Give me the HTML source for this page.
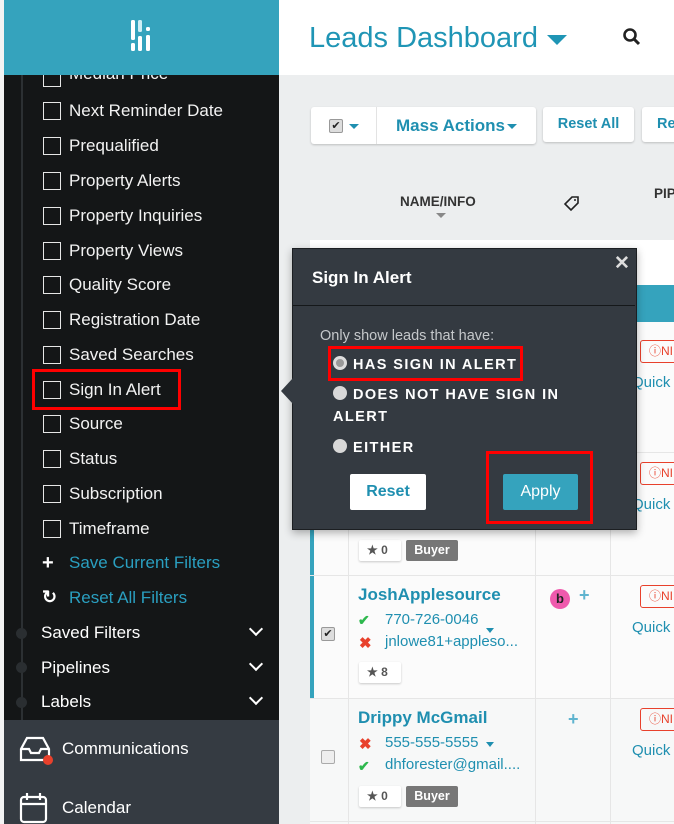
<!DOCTYPE html>
<html><head><meta charset="utf-8"><style>
*{margin:0;padding:0;box-sizing:border-box}
body{width:674px;height:824px;overflow:hidden;position:relative;background:#eceeef;font-family:"Liberation Sans",sans-serif}
.a{position:absolute;white-space:nowrap}
#side{left:4px;top:0;width:275px;height:824px;background:#141617}
.it{position:absolute;left:69px;color:#f2f2f2;font-size:17px;line-height:20px;white-space:nowrap}
.cb{position:absolute;left:43px;width:18px;height:18px;border:1.5px solid #e6e6e6}
.sec{position:absolute;left:41px;color:#fff;font-size:17px;line-height:20px}
.dot{position:absolute;left:16px;width:11px;height:11px;border-radius:50%;background:#2a2e31}
.chev{position:absolute;left:251px;width:10px;height:10px;border-right:2px solid #fff;border-bottom:2px solid #fff;transform:rotate(45deg)}
.btn{position:absolute;background:#fff;border-radius:3px;box-shadow:0 1px 2px rgba(0,0,0,.2);color:#1f8fb0;font-weight:bold}
.teal{color:#1d8fb0}
.rad{display:inline-block;width:14px;height:14px;border-radius:50%;background:#d8d8d8;vertical-align:-1px;margin-right:6px}
.opt{position:absolute;color:#fff;font-weight:bold;font-size:14.5px;letter-spacing:1.4px;line-height:22px}
</style></head><body>
<div class="a" style="left:0;top:0;width:4px;height:824px;background:#f3f3f3"></div>
<div id="side" class="a">
 <div class="a" style="left:0;top:0;width:275px;height:75px;background:#35a3bd"></div>
 <svg class="a" style="left:124px;top:19px" width="32" height="34" viewBox="0 0 32 34"><rect x="3" y="1" width="4" height="20" rx="1.5" fill="#fff"/><rect x="10" y="1" width="4" height="12" rx="1.5" fill="#d0eef5"/><rect x="3" y="24" width="4" height="8" rx="1.5" fill="#fff"/><rect x="10" y="17" width="4" height="15" rx="1.5" fill="#fff"/><rect x="18" y="8" width="4" height="4" rx="1.5" fill="#fff"/><rect x="18" y="16" width="4" height="16" rx="1.5" fill="#fff"/></svg>
 <div class="a" style="left:17px;top:75px;width:2px;height:645px;background:#2c3033"></div>
</div>
<div class="a" style="left:4px;top:75px;width:275px;height:645px;overflow:hidden">
 <div class="cb" style="left:39px;top:-6px"></div><div class="it" style="left:65px;top:-11px">Median Price</div>
</div>
<div class="cb" style="top:102px"></div><div class="it" style="top:101px">Next Reminder Date</div>
<div class="cb" style="top:137px"></div><div class="it" style="top:136px">Prequalified</div>
<div class="cb" style="top:172px"></div><div class="it" style="top:171px">Property Alerts</div>
<div class="cb" style="top:207px"></div><div class="it" style="top:206px">Property Inquiries</div>
<div class="cb" style="top:242px"></div><div class="it" style="top:241px">Property Views</div>
<div class="cb" style="top:276px"></div><div class="it" style="top:275px">Quality Score</div>
<div class="cb" style="top:311px"></div><div class="it" style="top:310px">Registration Date</div>
<div class="cb" style="top:346px"></div><div class="it" style="top:345px">Saved Searches</div>
<div class="cb" style="top:381px"></div><div class="it" style="top:380px">Sign In Alert</div>
<div class="a" style="left:32px;top:369px;width:149px;height:41px;border:3px solid #f00"></div>
<div class="cb" style="top:415px"></div><div class="it" style="top:414px">Source</div>
<div class="cb" style="top:450px"></div><div class="it" style="top:449px">Status</div>
<div class="cb" style="top:485px"></div><div class="it" style="top:484px">Subscription</div>
<div class="cb" style="top:520px"></div><div class="it" style="top:519px">Timeframe</div>
<div class="a" style="left:42px;top:554px;color:#fff;font-size:20px;font-weight:bold;line-height:18px">+</div>
<div class="it teal" style="top:553px;color:#2a9fc0">Save Current Filters</div>
<div class="a" style="left:42px;top:587px;color:#fff;font-size:18px;font-weight:bold;line-height:20px">&#x21bb;</div>
<div class="it" style="top:588px;color:#2a9fc0">Reset All Filters</div>
<div class="dot" style="top:628px"></div><div class="sec" style="top:623px">Saved Filters</div><div class="chev" style="top:624px"></div>
<div class="dot" style="top:662px"></div><div class="sec" style="top:658px">Pipelines</div><div class="chev" style="top:659px"></div>
<div class="dot" style="top:697px"></div><div class="sec" style="top:692px">Labels</div><div class="chev" style="top:693px"></div>
<div class="a" style="left:4px;top:720px;width:275px;height:104px;background:#353b42"></div>
<svg class="a" style="left:18px;top:735px" width="36" height="30" viewBox="0 0 36 30"><path d="M3 14 L9 3 H25 L31 14 V25 H3 Z M3 14 H11 L13 18 H21 L23 14 H31" fill="none" stroke="#fff" stroke-width="2.2"/><circle cx="30" cy="25" r="5" fill="#e8412c"/></svg>
<div class="a" style="left:62px;top:739px;color:#fff;font-size:17px">Communications</div>
<svg class="a" style="left:19px;top:791px" width="30" height="33" viewBox="0 0 30 33"><rect x="2" y="6" width="25" height="25" rx="3" fill="none" stroke="#fff" stroke-width="2.2"/><path d="M2 13 H27 M8 2 V9 M21 2 V9" stroke="#fff" stroke-width="2.2"/></svg>
<div class="a" style="left:62px;top:798px;color:#fff;font-size:17px">Calendar</div>

<!-- header -->
<div class="a" style="left:279px;top:0;width:395px;height:75px;background:#fff"></div>
<div class="a" style="left:309px;top:20px;color:#1f95b5;font-size:29px;line-height:36px">Leads Dashboard</div>
<div class="a" style="left:547px;top:35px;border-left:10px solid transparent;border-right:10px solid transparent;border-top:10px solid #1f95b5"></div>
<svg class="a" style="left:622px;top:27px" width="20" height="20" viewBox="0 0 20 20"><circle cx="8" cy="8" r="5.5" fill="none" stroke="#222" stroke-width="2.6"/><path d="M12 12 L17 17" stroke="#222" stroke-width="3"/></svg>

<!-- toolbar -->
<div class="btn" style="left:311px;top:107px;width:225px;height:37px"></div>
<div class="a" style="left:376px;top:107px;width:1px;height:37px;background:#e3e3e3"></div>
<div class="a" style="left:329px;top:119px;width:14px;height:14px;border:1px solid #999;border-radius:2px;background:#ddd;font-size:11px;line-height:12px;text-align:center;color:#222">&#10004;</div>
<div class="a" style="left:349px;top:124px;border-left:5px solid transparent;border-right:5px solid transparent;border-top:5px solid #1f8fb0"></div>
<div class="a" style="left:396px;top:116px;color:#1f8fb0;font-size:17px;font-weight:bold">Mass Actions</div>
<div class="a" style="left:507px;top:124px;border-left:5px solid transparent;border-right:5px solid transparent;border-top:5px solid #1f8fb0"></div>
<div class="btn" style="left:543px;top:107px;width:91px;height:35px;font-size:14.5px;text-align:center;line-height:35px">Reset All</div>
<div class="btn" style="left:642px;top:107px;width:40px;height:35px;font-size:14.5px;line-height:35px;padding-left:15px">Re</div>

<div class="a" style="left:400px;top:194px;color:#333;font-size:13.5px;font-weight:bold">NAME/INFO</div>
<div class="a" style="left:436px;top:213px;border-left:5px solid transparent;border-right:5px solid transparent;border-top:5px solid #888"></div>
<svg class="a" style="left:563px;top:195px" width="18" height="18" viewBox="0 0 18 18"><path d="M9 2 H15 V8 L8 15 L2 9 Z" fill="none" stroke="#222" stroke-width="1.6"/><circle cx="12" cy="5" r="1" fill="#222"/></svg>
<div class="a" style="left:654px;top:186px;color:#333;font-size:13.5px;font-weight:bold">PIP</div>

<!-- table -->
<div class="a" style="left:310px;top:240px;width:364px;height:584px;background:#fff"></div>
<div class="a" style="left:310px;top:285px;width:364px;height:37px;background:#35a3bd"></div>
<div class="a" style="left:310px;top:322px;width:364px;height:376px;background:#fbfbfb"></div>
<div class="a" style="left:310px;top:322px;width:4px;height:376px;background:#35a3bd"></div>
<div class="a" style="left:310px;top:698px;width:364px;height:126px;background:#f7f8f8"></div>
<div class="a" style="left:348px;top:322px;width:1px;height:502px;background:#e6e6e6"></div>
<div class="a" style="left:535px;top:322px;width:1px;height:502px;background:#e6e6e6"></div>
<div class="a" style="left:610px;top:322px;width:1px;height:502px;background:#e6e6e6"></div>
<div class="a" style="left:310px;top:452px;width:364px;height:1px;background:#e6e6e6"></div>
<div class="a" style="left:310px;top:575px;width:364px;height:1px;background:#e6e6e6"></div>
<div class="a" style="left:310px;top:698px;width:364px;height:1px;background:#e6e6e6"></div>
<div class="a" style="left:310px;top:821px;width:364px;height:1px;background:#e6e6e6"></div>

<div class="a" style="left:640px;top:340px;width:40px;height:23px;border:1px solid #e8412c;border-radius:3px;color:#e8412c;font-size:12px;line-height:21px;padding-left:8px">&#9432;NI</div>
<div class="a" style="left:632px;top:374px;color:#1f8fb0;font-size:15px">Quick .</div>
<div class="a" style="left:640px;top:462px;width:40px;height:23px;border:1px solid #e8412c;border-radius:3px;color:#e8412c;font-size:12px;line-height:21px;padding-left:8px">&#9432;NI</div>
<div class="a" style="left:632px;top:496px;color:#1f8fb0;font-size:15px">Quick .</div>
<div class="a" style="left:640px;top:585px;width:40px;height:23px;border:1px solid #e8412c;border-radius:3px;color:#e8412c;font-size:12px;line-height:21px;padding-left:8px">&#9432;NI</div>
<div class="a" style="left:632px;top:619px;color:#1f8fb0;font-size:15px">Quick .</div>
<div class="a" style="left:640px;top:708px;width:40px;height:23px;border:1px solid #e8412c;border-radius:3px;color:#e8412c;font-size:12px;line-height:21px;padding-left:8px">&#9432;NI</div>
<div class="a" style="left:632px;top:742px;color:#1f8fb0;font-size:15px">Quick .</div>

<!-- row 1 tail -->
<div class="a" style="left:359px;top:540px;width:42px;height:21px;background:#fff;border-radius:2px;box-shadow:0 1px 2px rgba(0,0,0,.2);color:#555;font-size:12px;line-height:21px;padding-left:8px;font-weight:bold">&#9733; 0</div>
<div class="a" style="left:406px;top:540px;width:52px;height:21px;background:#777;border-radius:2px;color:#fff;font-size:12.5px;font-weight:bold;line-height:21px;text-align:center">Buyer</div>

<!-- row 2 -->
<div class="a" style="left:321px;top:627px;width:14px;height:14px;border:1px solid #999;border-radius:2px;background:#ddd;font-size:11px;line-height:12px;text-align:center;color:#222">&#10004;</div>
<div class="a" style="left:358px;top:585px;color:#1f8fb0;font-size:17px;font-weight:bold">JoshApplesource</div>
<div class="a" style="left:358px;top:612px;color:#2db84d;font-size:14px;font-weight:bold">&#10004;</div>
<div class="a" style="left:385px;top:611px;color:#1f8fb0;font-size:15px">770-726-0046</div>
<div class="a" style="left:486px;top:628px;border-left:4px solid transparent;border-right:4px solid transparent;border-top:5px solid #1f8fb0"></div>
<div class="a" style="left:359px;top:634px;color:#e8412c;font-size:15px;font-weight:bold">&#10006;</div>
<div class="a" style="left:385px;top:633px;color:#1f8fb0;font-size:15px">jnlowe81+appleso...</div>
<div class="a" style="left:359px;top:662px;width:42px;height:21px;background:#fff;border-radius:2px;box-shadow:0 1px 2px rgba(0,0,0,.2);color:#555;font-size:12px;line-height:21px;padding-left:8px;font-weight:bold">&#9733; 8</div>
<div class="a" style="left:550px;top:589px;width:20px;height:20px;border-radius:50%;background:#ef5aad;color:#222;font-size:13px;font-weight:bold;text-align:center;line-height:19px">b</div>
<div class="a" style="left:579px;top:585px;color:#5fb4cf;font-size:18px;font-weight:bold">+</div>

<!-- row 3 -->
<div class="a" style="left:321px;top:750px;width:14px;height:14px;border:1px solid #aaa;border-radius:2px;background:#eee"></div>
<div class="a" style="left:358px;top:708px;color:#1f8fb0;font-size:17px;font-weight:bold">Drippy McGmail</div>
<div class="a" style="left:359px;top:735px;color:#e8412c;font-size:15px;font-weight:bold">&#10006;</div>
<div class="a" style="left:385px;top:734px;color:#1f8fb0;font-size:15px">555-555-5555</div>
<div class="a" style="left:486px;top:742px;border-left:4px solid transparent;border-right:4px solid transparent;border-top:5px solid #1f8fb0"></div>
<div class="a" style="left:358px;top:758px;color:#2db84d;font-size:14px;font-weight:bold">&#10004;</div>
<div class="a" style="left:385px;top:756px;color:#1f8fb0;font-size:15px">dhforester@gmail....</div>
<div class="a" style="left:359px;top:786px;width:42px;height:21px;background:#fff;border-radius:2px;box-shadow:0 1px 2px rgba(0,0,0,.2);color:#555;font-size:12px;line-height:21px;padding-left:8px;font-weight:bold">&#9733; 0</div>
<div class="a" style="left:406px;top:786px;width:52px;height:21px;background:#777;border-radius:2px;color:#fff;font-size:12.5px;font-weight:bold;line-height:21px;text-align:center">Buyer</div>
<div class="a" style="left:568px;top:709px;color:#5fb4cf;font-size:18px;font-weight:bold">+</div>

<!-- popup -->
<div class="a" style="left:292px;top:248px;width:345px;height:282px;background:#343a41;border:1px solid #1c1f22;box-shadow:0 3px 8px rgba(0,0,0,.3)"></div>
<div class="a" style="left:281px;top:378px;border-top:13px solid transparent;border-bottom:13px solid transparent;border-right:12px solid #343a41"></div>
<div class="a" style="left:312px;top:268px;color:#fff;font-size:17px;font-weight:bold">Sign In Alert</div>
<div class="a" style="left:614px;top:252px;color:#ddd;font-size:19px;font-weight:bold">&#10005;</div>
<div class="a" style="left:293px;top:305px;width:342px;height:1px;background:#15181a"></div>
<div class="a" style="left:320px;top:328px;color:#c5c8cb;font-size:14.5px">Only show leads that have:</div>
<div class="opt" style="left:333px;top:354px"><span class="rad" style="background:#999;border:3px solid #ddd"></span>HAS SIGN IN ALERT</div>
<div class="a" style="left:328px;top:346px;width:195px;height:35px;border:3px solid #f00"></div>
<div class="opt" style="left:333px;top:384px;width:240px;line-height:22px;white-space:normal"><span class="rad"></span>DOES NOT HAVE SIGN IN ALERT</div>
<div class="opt" style="left:333px;top:437px"><span class="rad"></span>EITHER</div>
<div class="a" style="left:350px;top:474px;width:76px;height:36px;background:#fff;border-radius:2px;color:#1f8fb0;font-size:16px;font-weight:bold;text-align:center;line-height:36px">Reset</div>
<div class="a" style="left:503px;top:474px;width:75px;height:36px;background:#35a3bd;border-radius:2px;color:#fff;font-size:16px;text-align:center;line-height:36px">Apply</div>
<div class="a" style="left:486px;top:451px;width:107px;height:73px;border:3px solid #f00"></div>
</body></html>
